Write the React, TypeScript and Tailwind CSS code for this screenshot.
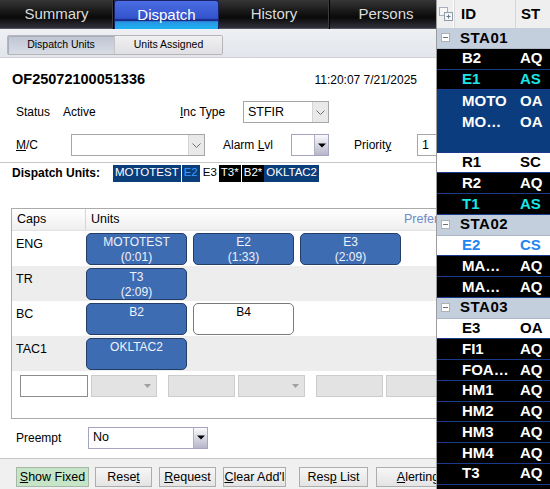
import React from 'react'

function Chevron() {
  return (
    <svg width="9" height="5" viewBox="0 0 9 5">
      <path d="M0.5 0.5 L4.5 4.5 L8.5 0.5" fill="none" stroke="#707070" strokeWidth="1" />
    </svg>
  )
}

function BlackTri() {
  return (
    <svg width="8" height="5" viewBox="0 0 8 5">
      <path d="M0 0.5 H8 L4 4.5 Z" fill="#000" />
    </svg>
  )
}

function GreyTri() {
  return (
    <svg width="7" height="4" viewBox="0 0 7 4">
      <path d="M0 0 H7 L3.5 4 Z" fill="#a0a0a0" />
    </svg>
  )
}

function Combo({ className, value }: { className: string; value?: string }) {
  return (
    <div className={`flex h-[22px] shrink-0 border border-[#a6a6a6] bg-white ${className}`}>
      <div className="flex flex-1 items-center pl-[4px] text-[12.5px]">{value}</div>
      <div className="flex w-[16px] items-center justify-center border-l border-[#d4d4d4] bg-[#e9e9e9]">
        <Chevron />
      </div>
    </div>
  )
}

function DropCombo({ className, value }: { className: string; value?: string }) {
  return (
    <div className={`flex h-[22px] shrink-0 border border-[#a4a4c0] bg-white ${className}`}>
      <div className="flex flex-1 items-center pl-[4px] text-[12.5px]">{value}</div>
      <div className="flex w-[14px] items-center justify-center border-l border-[#b0b0c4] bg-gradient-to-b from-[#fafafc] to-[#b6b6ca]">
        <BlackTri />
      </div>
    </div>
  )
}

function TabBar() {
  return (
    <div className="flex h-[29px] shrink-0 bg-[linear-gradient(to_bottom,#363636_0%,#141414_45%,#0a0a0a_60%,#30303a_96%,#707078_100%)] text-[15px]">
      <div className="flex w-[114px] shrink-0 items-center justify-center border-r border-black text-[#dcdcdc] shadow-[inset_-1px_0_0_#3c3c3c]">
        Summary
      </div>
      <div className="flex w-[105px] shrink-0 items-center justify-center rounded-t-[3px] border-x border-t border-[#1c2466] bg-[linear-gradient(to_bottom,#4a6de2_0%,#3353cc_62%,#1c2c8c_66%,#1a2a88_70%,#2a94e4_74%,#1cb2f2_100%)] text-white">
        Dispatch
      </div>
      <div className="flex w-[111px] shrink-0 items-center justify-center border-r border-black text-[#dcdcdc] shadow-[inset_-1px_0_0_#3c3c3c]">
        History
      </div>
      <div className="flex flex-1 items-center justify-center pl-[6px] text-[#dcdcdc]">Persons</div>
    </div>
  )
}

function SubTabs() {
  return (
    <div className="h-[29px] shrink-0 border-b border-[#d0d0d0] bg-gradient-to-b from-[#eef0f4] to-[#e2e5eb] pl-[7px] pt-[6px]">
      <div className="flex h-[20px] w-[216px] rounded-[2px] border border-[#b6b6b6] text-[10.5px]">
        <div className="flex w-[106px] shrink-0 items-center justify-center bg-gradient-to-b from-[#bfc5d3] to-[#d8dce5] shadow-[inset_1px_1px_0_#a8aebc]">
          Dispatch Units
        </div>
        <div className="flex flex-1 items-center justify-center border-l border-[#c4c4c4] bg-gradient-to-b from-[#f0f0f3] to-[#e0e0e4]">
          Units Assigned
        </div>
      </div>
    </div>
  )
}

type Unit = { id: string; time?: string; white?: boolean }

const capRows: { cap: string; units: Unit[] }[] = [
  {
    cap: 'ENG',
    units: [
      { id: 'MOTOTEST', time: '(0:01)' },
      { id: 'E2', time: '(1:33)' },
      { id: 'E3', time: '(2:09)' },
    ],
  },
  { cap: 'TR', units: [{ id: 'T3', time: '(2:09)' }] },
  { cap: 'BC', units: [{ id: 'B2' }, { id: 'B4', white: true }] },
  { cap: 'TAC1', units: [{ id: 'OKLTAC2' }] },
]

function UnitButton({ u }: { u: Unit }) {
  return (
    <div
      className={
        u.white
          ? 'h-[32px] w-[101px] shrink-0 rounded-[5px] border border-[#7a7a7a] bg-white pt-[1px] text-center text-[12px] leading-[15px] text-black'
          : 'h-[32px] w-[101px] shrink-0 rounded-[5px] border border-[#233f68] bg-[#3e6cb3] pt-[1px] text-center text-[12px] leading-[15px] text-[#eef2fa]'
      }
    >
      <div>{u.id}</div>
      {u.time && <div>{u.time}</div>}
    </div>
  )
}

function CapsGrid() {
  return (
    <div className="ml-[11px] mt-[25px] w-[440px] shrink-0 border border-[#ababab]">
      <div className="flex h-[22px] border-b border-[#e2e2e2] bg-gradient-to-b from-white to-[#efefef] text-[12.5px]">
        <div className="flex w-[74px] shrink-0 items-center border-r border-[#d6d6d6] pl-[5px]">Caps</div>
        <div className="flex w-[318px] shrink-0 items-center pl-[5px]">Units</div>
        <div className="flex shrink-0 items-center whitespace-nowrap text-[#6d8cc8]">Preferred</div>
      </div>
      {capRows.map((r, i) => (
        <div key={r.cap} className={i % 2 === 1 ? 'flex h-[35px] bg-[#ededed]' : 'flex h-[35px] bg-white'}>
          <div className="w-[74px] shrink-0 pl-[4px] pt-[6px] text-[12.5px] leading-[15px]">{r.cap}</div>
          <div className="flex gap-[6px] pt-[2px]">
            {r.units.map((u) => (
              <UnitButton key={u.id} u={u} />
            ))}
          </div>
        </div>
      ))}
      <div className="flex pb-[21px] pl-[8px] pt-[4px]">
        <div className="h-[22px] w-[68px] shrink-0 border border-[#8c8c8c] bg-white" />
        <div className="ml-[3px] flex h-[22px] w-[66px] shrink-0 items-center justify-end border border-[#cccccc] bg-[#e3e3e3] pr-[5px]">
          <GreyTri />
        </div>
        <div className="ml-[11px] h-[22px] w-[67px] shrink-0 border border-[#cccccc] bg-[#e3e3e3]" />
        <div className="ml-[3px] flex h-[22px] w-[67px] shrink-0 items-center justify-end border border-[#cccccc] bg-[#e3e3e3] pr-[5px]">
          <GreyTri />
        </div>
        <div className="ml-[11px] h-[22px] w-[67px] shrink-0 border border-[#cccccc] bg-[#e3e3e3]" />
        <div className="ml-[3px] h-[22px] w-[67px] shrink-0 border border-[#cccccc] bg-[#e3e3e3]" />
      </div>
    </div>
  )
}

function Chip({ className, children }: { className: string; children: React.ReactNode }) {
  return <span className={`flex h-[17px] shrink-0 items-center px-[2px] ${className}`}>{children}</span>
}

function BottomBar() {
  const btn =
    'flex h-[20px] shrink-0 items-center justify-center border border-[#adadad] bg-gradient-to-b from-[#f6f6f6] to-[#e4e4e4] text-[12.5px] whitespace-nowrap'
  return (
    <div className="mt-[10px] flex flex-1 border-t border-[#c6c6c6] bg-[#f0f0f0] pl-[16px] pt-[8px]">
      <div className="flex h-[20px] w-[73px] shrink-0 items-center justify-center whitespace-nowrap border border-[#a8b8a8] bg-[#c6e5c6] text-[12.5px]">
        <span>
          <span className="underline">S</span>how Fixed
        </span>
      </div>
      <div className={`${btn} ml-[6px] w-[57px]`}>
        <span>
          Rese<span className="underline">t</span>
        </span>
      </div>
      <div className={`${btn} ml-[7px] w-[57px]`}>
        <span>
          <span className="underline">R</span>equest
        </span>
      </div>
      <div className={`${btn} ml-[7px] w-[63px]`}>
        <span>
          <span className="underline">C</span>lear Add'l
        </span>
      </div>
      <div className={`${btn} ml-[13px] w-[69px]`}>
        <span>
          Res<span className="underline">p</span> List
        </span>
      </div>
      <div className={`${btn} ml-[8px] w-[84px]`}>
        <span>
          <span className="underline">A</span>lerting
        </span>
      </div>
    </div>
  )
}

function MainPanel() {
  return (
    <div className="flex w-[437px] shrink-0 flex-col overflow-hidden border-r border-[#9c9c9c] bg-white">
      <TabBar />
      <SubTabs />
      <div className="flex h-[43px] shrink-0 items-center justify-between pl-[12px] pr-[19px]">
        <span className="text-[14.5px] font-bold">OF25072100051336</span>
        <span className="text-[12px]">11:20:07 7/21/2025</span>
      </div>
      <div className="flex h-[22px] shrink-0 items-center pl-[16px]">
        <span className="w-[47px] shrink-0">Status</span>
        <span className="w-[117px] shrink-0">Active</span>
        <span className="w-[63px] shrink-0">
          <span className="underline">I</span>nc Type
        </span>
        <Combo className="w-[86px]" value="STFIR" />
      </div>
      <div className="mt-[11px] flex h-[22px] shrink-0 items-center pl-[16px]">
        <span className="w-[55px] shrink-0">
          <span className="underline">M</span>/C
        </span>
        <Combo className="w-[134px]" />
        <span className="ml-[18px] w-[68px] shrink-0">
          Alarm <span className="underline">L</span>vl
        </span>
        <DropCombo className="w-[38px]" />
        <span className="ml-[25px] w-[63px] shrink-0">
          Priorit<span className="underline">y</span>
        </span>
        <div className="flex h-[22px] w-[40px] shrink-0 items-center border border-[#a6a6a6] pl-[4px] text-[12.5px]">1</div>
      </div>
      <div className="mt-[6px] h-px shrink-0 bg-[#c8c8c8]" />
      <div className="flex h-[20px] shrink-0 items-center pl-[12px] text-[11.5px]">
        <span className="w-[101px] shrink-0 text-[12px] font-bold">Dispatch Units:</span>
        <Chip className="bg-[#0b3d7a] text-white">MOTOTEST</Chip>
        <Chip className="ml-[1px] bg-[#0b3d7a] text-[#3b9cff]">E2</Chip>
        <Chip className="ml-[1px] bg-white text-black">E3</Chip>
        <Chip className="bg-black text-white">T3*</Chip>
        <Chip className="ml-[1px] bg-black text-white">B2*</Chip>
        <Chip className="bg-[#0b3d7a] text-white">OKLTAC2</Chip>
      </div>
      <CapsGrid />
      <div className="mt-[8px] flex h-[21px] shrink-0 items-center pl-[16px]">
        <span className="w-[72px] shrink-0">Preempt</span>
        <DropCombo className="w-[120px]" value="No" />
      </div>
      <BottomBar />
    </div>
  )
}

type Row =
  | { kind: 'group'; name: string }
  | { kind: 'unit'; ids: string[]; st: string; tone: 'black' | 'cyan' | 'white' | 'blue' | 'navy'; tall?: boolean }

const rows: Row[] = [
  { kind: 'group', name: 'STA01' },
  { kind: 'unit', ids: ['B2'], st: 'AQ', tone: 'black' },
  { kind: 'unit', ids: ['E1'], st: 'AS', tone: 'cyan' },
  { kind: 'unit', ids: ['MOTO', 'MO…'], st: 'OA', tone: 'navy', tall: true },
  { kind: 'unit', ids: ['R1'], st: 'SC', tone: 'white' },
  { kind: 'unit', ids: ['R2'], st: 'AQ', tone: 'black' },
  { kind: 'unit', ids: ['T1'], st: 'AS', tone: 'cyan' },
  { kind: 'group', name: 'STA02' },
  { kind: 'unit', ids: ['E2'], st: 'CS', tone: 'blue' },
  { kind: 'unit', ids: ['MA…'], st: 'AQ', tone: 'black' },
  { kind: 'unit', ids: ['MA…'], st: 'AQ', tone: 'black' },
  { kind: 'group', name: 'STA03' },
  { kind: 'unit', ids: ['E3'], st: 'OA', tone: 'white' },
  { kind: 'unit', ids: ['FI1'], st: 'AQ', tone: 'black' },
  { kind: 'unit', ids: ['FOA…'], st: 'AQ', tone: 'black' },
  { kind: 'unit', ids: ['HM1'], st: 'AQ', tone: 'black' },
  { kind: 'unit', ids: ['HM2'], st: 'AQ', tone: 'black' },
  { kind: 'unit', ids: ['HM3'], st: 'AQ', tone: 'black' },
  { kind: 'unit', ids: ['HM4'], st: 'AQ', tone: 'black' },
  { kind: 'unit', ids: ['T3'], st: 'AQ', tone: 'black' },
  { kind: 'unit', ids: [''], st: '', tone: 'black' },
]

const toneClass = {
  black: 'bg-black text-white',
  cyan: 'bg-black text-[#19e6e6]',
  white: 'bg-white text-black',
  blue: 'bg-white text-[#1e86f4]',
  navy: 'bg-[#0b3d7e] text-white',
}

function ExpandIcon() {
  return (
    <svg width="14" height="14" viewBox="0 0 14 14">
      <rect x="0.5" y="0.5" width="8" height="8" fill="#f6f6f6" stroke="#a4afbb" />
      <rect x="5.5" y="5.5" width="8" height="8" fill="#f6f6f6" stroke="#8e9cab" />
      <path d="M7.5 9.5 H11.5 M9.5 7.5 V11.5" stroke="#6c7a8a" />
    </svg>
  )
}

function UnitList() {
  return (
    <div className="flex w-[113px] shrink-0 flex-col overflow-hidden bg-black text-[15px] font-bold">
      <div className="flex h-[28px] shrink-0 bg-[#efefef] text-black">
        <div className="flex w-[18px] shrink-0 items-center justify-center border-r border-[#dadada] shadow-[inset_-1px_0_0_#fff]">
          <ExpandIcon />
        </div>
        <div className="flex w-[61px] shrink-0 items-center border-r border-[#d6d6d6] pl-[6px]">ID</div>
        <div className="flex flex-1 items-center pl-[5px]">ST</div>
      </div>
      {rows.map((r, i) =>
        r.kind === 'group' ? (
          <div key={i} className="flex h-[20.75px] shrink-0 items-center border-b border-[#aab8c8] bg-[#c3cfdd] text-black">
            <div className="ml-[4px] flex h-[9px] w-[9px] items-center justify-center border border-[#b0b0b0] bg-white">
              <div className="h-px w-[5px] bg-[#707070]" />
            </div>
            <span className="ml-[10px] tracking-[0.5px]">{r.name}</span>
          </div>
        ) : (
          <div
            key={i}
            className={`flex shrink-0 border-b border-[#1a3a8c] ${toneClass[r.tone]} ${r.tall ? 'h-[62.25px]' : 'h-[20.75px] items-center'}`}
          >
            <div className="w-[83px] shrink-0 pl-[25px]">
              {r.ids.map((id, j) => (
                <div key={j} className={r.tall ? 'h-[20.75px] leading-[21px]' : ''}>
                  {id}
                </div>
              ))}
            </div>
            <div>
              {r.ids.map((_, j) => (
                <div key={j} className={r.tall ? 'h-[20.75px] leading-[21px]' : ''}>
                  {r.st}
                </div>
              ))}
            </div>
          </div>
        )
      )}
    </div>
  )
}

export default function App() {
  return (
    <div className="flex h-[489px] w-[550px] overflow-hidden bg-white font-['Liberation_Sans',Arial,sans-serif] text-[12px] text-black">
      <MainPanel />
      <UnitList />
    </div>
  )
}
